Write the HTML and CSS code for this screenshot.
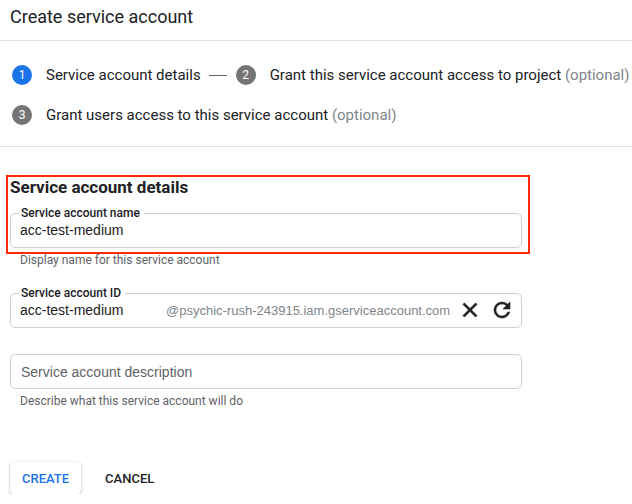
FILE: index.html
```html
<!DOCTYPE html>
<html lang="en">
<head>
  <meta charset="UTF-8">
  <meta name="viewport" content="width=device-width, initial-scale=1.0">
  <title>Create service account</title>
  <link rel="stylesheet" href="styles.css">
</head>
<body>
  <div class="header">Create service account</div>

  <div class="steps">
    <div class="step-row">
      <span class="step-num active">1</span>
      <span class="step-text">Service account details</span>
      <span class="step-dash"></span>
      <span class="step-num">2</span>
      <span class="step-text">Grant this service account access to project <span class="optional">(optional)</span></span>
    </div>
    <div class="step-row">
      <span class="step-num">3</span>
      <span class="step-text">Grant users access to this service account <span class="optional">(optional)</span></span>
    </div>
  </div>

  <div class="content">
    <div class="highlight">
      <h2>Service account details</h2>
      <fieldset class="field">
        <legend>Service account name</legend>
        <div class="field-row"><span class="value">acc-test-medium</span></div>
      </fieldset>
    </div>
    <div class="hint hint-first">Display name for this service account</div>

    <fieldset class="field field-id">
      <legend>Service account ID</legend>
      <div class="field-row">
        <span class="value id-value">acc-test-medium</span>
        <span class="suffix">@psychic-rush-243915.iam.gserviceaccount.com</span>
        <svg class="icon" viewBox="0 0 24 24" width="24" height="24"><path d="M19 6.41L17.59 5 12 10.59 6.41 5 5 6.41 10.59 12 5 17.59 6.41 19 12 13.41 17.59 19 19 17.59 13.41 12z" fill="#202124" stroke="#202124" stroke-width="0.8"/></svg>
        <svg class="icon" viewBox="0 0 24 24" width="24" height="24"><path d="M17.65 6.35C16.2 4.9 14.21 4 12 4c-4.42 0-7.99 3.58-7.99 8s3.57 8 7.99 8c3.73 0 6.84-2.55 7.73-6h-2.08c-.82 2.33-3.04 4-5.65 4-3.31 0-6-2.69-6-6s2.69-6 6-6c1.66 0 3.14.69 4.22 1.78L13 11h7V4l-2.35 2.35z" fill="#202124" stroke="#202124" stroke-width="0.6"/></svg>
      </div>
    </fieldset>

    <div class="field field-plain">
      <span class="placeholder">Service account description</span>
    </div>
    <div class="hint">Describe what this service account will do</div>

    <div class="actions">
      <button class="btn btn-create">CREATE</button>
      <button class="btn btn-cancel">CANCEL</button>
    </div>
  </div>
</body>
</html>
```

FILE: styles.css
```css
body {
  margin: 0;
  background: #ffffff;
  font-family: Roboto, "Liberation Sans", Arial, sans-serif;
  color: #202124;
}
.header {
  height: 41px;
  padding: 5px 10px 0;
  box-sizing: border-box;
  font-size: 18px;
  line-height: 24px;
  border-bottom: 1px solid #e0e0e0;
}
.steps {
  padding: 22px 0 19px 12px;
  border-bottom: 1px solid #e0e0e0;
}
.step-row {
  display: flex;
  align-items: center;
  height: 24px;
  font-size: 15px;
}
.step-row + .step-row {
  margin-top: 16px;
}
.step-num {
  width: 20px;
  height: 20px;
  border-radius: 50%;
  background: #757575;
  color: #ffffff;
  font-size: 12px;
  line-height: 20px;
  text-align: center;
  flex-shrink: 0;
}
.step-num.active {
  background: #1a73e8;
}
.step-text {
  margin-left: 14px;
  white-space: nowrap;
}
.step-dash {
  width: 18px;
  height: 1px;
  margin: 1px 9px 0 8px;
  background: #5f6368;
}
.optional {
  color: #80868b;
}
.content {
  padding: 28px 0 0;
}
.highlight {
  margin-left: 6px;
  width: 524px;
  box-sizing: border-box;
  border: 2px solid #ff2a00;
  padding: 0 6px 4px 2px;
}
h2 {
  margin: 0 0 9px;
  font-size: 17px;
  font-weight: 700;
  line-height: 20px;
}
.field {
  margin: 0;
  min-width: 0;
  border: 1px solid #cfcfcf;
  border-radius: 5px;
  padding: 0 8px 7px 9px;
  width: 512px;
  box-sizing: border-box;
}
.content > .field {
  margin-left: 10px;
}
.field legend {
  padding: 0 4px 0 1px;
  font-size: 12px;
  font-weight: 500;
  line-height: 14px;
}
.field-row {
  display: flex;
  align-items: center;
  height: 20px;
  font-family: "Liberation Sans", Arial, sans-serif;
  font-size: 14px;
  white-space: nowrap;
}
.id-value {
  width: 146px;
  flex-shrink: 0;
}
.suffix {
  color: #80868b;
  font-size: 13px;
}
.icon {
  margin-left: 8px;
  flex-shrink: 0;
}
.icon + .icon {
  margin-left: 8px;
}
.field-id {
  margin-top: 18px !important;
}
.field-plain {
  margin-top: 26px;
  padding: 7px 10px 6px;
  font-family: "Liberation Sans", Arial, sans-serif;
  font-size: 14px;
  line-height: 20px;
}
.placeholder {
  color: #5f6368;
}
.hint {
  margin: 4px 0 0 20px;
  font-size: 12px;
  line-height: 16px;
  color: #5f6368;
}
.hint-first {
  margin-top: -2px;
}
.actions {
  margin: 53px 0 0 10px;
  display: flex;
  gap: 12px;
}
.btn {
  height: 32px;
  padding: 0 12px;
  border: none;
  border-radius: 4px;
  background: #ffffff;
  font-family: Roboto, "Liberation Sans", Arial, sans-serif;
  font-size: 13px;
  font-weight: 500;
  cursor: pointer;
}
.btn-create {
  color: #1a73e8;
  box-shadow: 0 1px 3px rgba(0, 0, 0, 0.3);
}
.btn-cancel {
  color: #202124;
}
```
